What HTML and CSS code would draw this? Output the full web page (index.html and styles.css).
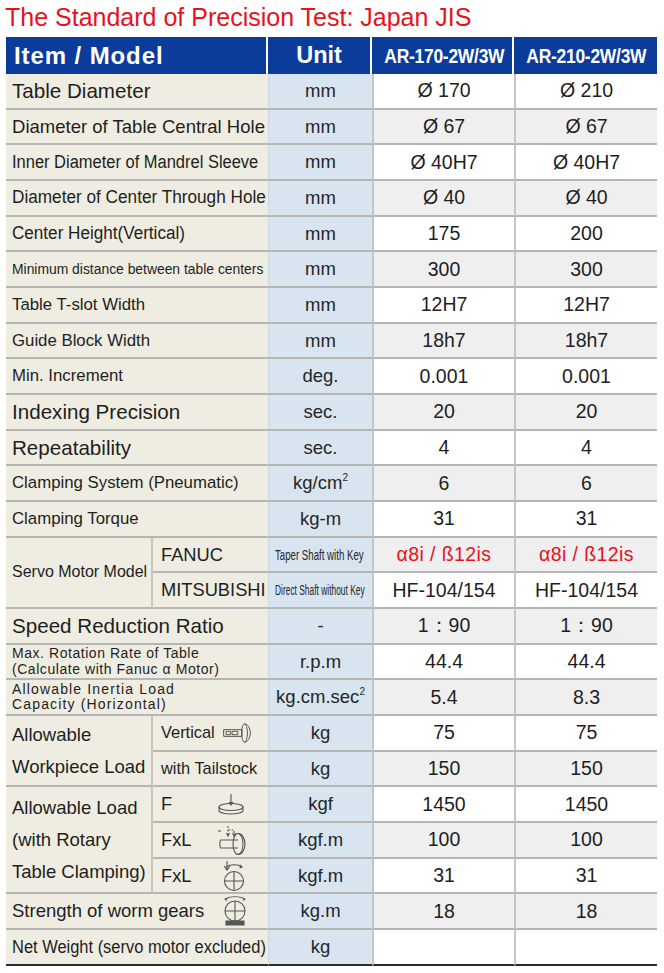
FILE: index.html
```html
<!DOCTYPE html>
<html>
<head>
<meta charset="utf-8">
<link rel="stylesheet" href="styles.css">
</head>
<body>
<h1 class="title">The Standard of Precision Test: Japan JIS</h1>
<table class="spec">
  <colgroup>
    <col class="c-a"><col class="c-b"><col class="c-unit"><col class="c-v"><col class="c-v2">
  </colgroup>
  <thead>
    <tr class="head">
      <th colspan="2" class="h-item">Item / Model</th>
      <th class="h-unit">Unit</th>
      <th class="h-model"><span class="hm">AR-170-2W/3W</span></th>
      <th class="h-model"><span class="hm">AR-210-2W/3W</span></th>
    </tr>
  </thead>
  <tbody>
    <tr class="w"><td colspan="2" class="lbl xl">Table Diameter</td><td class="unit">mm</td><td class="val">Ø 170</td><td class="val">Ø 210</td></tr>
    <tr class="g"><td colspan="2" class="lbl"><span class="sq f19 s975">Diameter of Table Central Hole</span></td><td class="unit">mm</td><td class="val">Ø 67</td><td class="val">Ø 67</td></tr>
    <tr class="w"><td colspan="2" class="lbl"><span class="sq f18 s915">Inner Diameter of Mandrel Sleeve</span></td><td class="unit">mm</td><td class="val">Ø 40H7</td><td class="val">Ø 40H7</td></tr>
    <tr class="g"><td colspan="2" class="lbl"><span class="sq f18 s955">Diameter of Center Through Hole</span></td><td class="unit">mm</td><td class="val">Ø 40</td><td class="val">Ø 40</td></tr>
    <tr class="w"><td colspan="2" class="lbl"><span class="sq f18 s95">Center Height(Vertical)</span></td><td class="unit">mm</td><td class="val">175</td><td class="val">200</td></tr>
    <tr class="g"><td colspan="2" class="lbl"><span class="sq f155 s895">Minimum distance between table centers</span></td><td class="unit">mm</td><td class="val">300</td><td class="val">300</td></tr>
    <tr class="w"><td colspan="2" class="lbl md2">Table T-slot Width</td><td class="unit">mm</td><td class="val">12H7</td><td class="val">12H7</td></tr>
    <tr class="g"><td colspan="2" class="lbl md2">Guide Block Width</td><td class="unit">mm</td><td class="val">18h7</td><td class="val">18h7</td></tr>
    <tr class="w"><td colspan="2" class="lbl md2">Min. Increment</td><td class="unit">deg.</td><td class="val">0.001</td><td class="val">0.001</td></tr>
    <tr class="g"><td colspan="2" class="lbl xl">Indexing Precision</td><td class="unit">sec.</td><td class="val">20</td><td class="val">20</td></tr>
    <tr class="w"><td colspan="2" class="lbl xl">Repeatability</td><td class="unit">sec.</td><td class="val">4</td><td class="val">4</td></tr>
    <tr class="g"><td colspan="2" class="lbl md2">Clamping System (Pneumatic)</td><td class="unit">kg/cm<sup>2</sup></td><td class="val">6</td><td class="val">6</td></tr>
    <tr class="w"><td colspan="2" class="lbl md2">Clamping Torque</td><td class="unit">kg-m</td><td class="val">31</td><td class="val">31</td></tr>
    <tr class="g"><td rowspan="2" class="lbl servo split">Servo Motor Model</td><td class="lbl sub big">FANUC</td><td class="unit tiny"><span class="sq s69">Taper Shaft with Key</span></td><td class="val red">α8i / ß12is</td><td class="val red">α8i / ß12is</td></tr>
    <tr class="w"><td class="lbl sub big">MITSUBISHI</td><td class="unit tiny"><span class="sq s60">Direct Shaft without Key</span></td><td class="val">HF-104/154</td><td class="val">HF-104/154</td></tr>
    <tr class="g"><td colspan="2" class="lbl xl">Speed Reduction Ratio</td><td class="unit">-</td><td class="val">1：90</td><td class="val">1：90</td></tr>
    <tr class="w"><td colspan="2" class="lbl two">Max. Rotation Rate of Table<br>(Calculate with Fanuc α Motor)</td><td class="unit">r.p.m</td><td class="val">44.4</td><td class="val">44.4</td></tr>
    <tr class="g"><td colspan="2" class="lbl two wide">Allowable Inertia Load<br>Capacity (Horizontal)</td><td class="unit">kg.cm.sec<sup>2</sup></td><td class="val">5.4</td><td class="val">8.3</td></tr>
    <tr class="w"><td rowspan="2" class="lbl grp tall split">Allowable<br>Workpiece Load</td>
      <td class="lbl sub"><span class="ico-row">Vertical
        <svg class="ico ico-v" viewBox="0 0 36 26"><g fill="none" stroke="#555" stroke-width="1.2"><path d="M2 9h22v8H2z"/><path d="M5 11h5v4H5zM12 11h7v4h-7z"/><ellipse cx="27" cy="13" rx="3.5" ry="11"/><path d="M27 2c3.5 0 7 5 7 11s-3.5 11-7 11"/></g></svg></span></td>
      <td class="unit">kg</td><td class="val">75</td><td class="val">75</td></tr>
    <tr class="g"><td class="lbl sub">with Tailstock</td><td class="unit">kg</td><td class="val">150</td><td class="val">150</td></tr>
    <tr class="w"><td rowspan="3" class="lbl grp tall split">Allowable Load<br>(with Rotary<br>Table Clamping)</td>
      <td class="lbl sub big"><span class="ico-row">F
        <svg class="ico ico-f" viewBox="0 0 34 24"><g fill="none" stroke="#555" stroke-width="1.1"><ellipse cx="17" cy="15" rx="12" ry="3.5"/><path d="M5 15v3.5c0 2 5.4 3.5 12 3.5s12-1.5 12-3.5V15"/><path d="M17 2v11"/><path d="M15 10l2 3 2-3" fill="#555"/></g></svg></span></td>
      <td class="unit">kgf</td><td class="val">1450</td><td class="val">1450</td></tr>
    <tr class="g"><td class="lbl sub big"><span class="ico-row">FxL
        <svg class="ico ico-fl" viewBox="0 0 34 32"><g fill="none" stroke="#555" stroke-width="1.1"><ellipse cx="24" cy="20" rx="5" ry="10.5"/><path d="M24 9.5c4 0 7 4.7 7 10.5s-3 10.5-7 10.5"/><path d="M7 16h17M7 24h17M7 16c-1.5 0-1.5 8 0 8"/><path d="M14 2v10M14 6h6v6" stroke-dasharray="2 1.5"/><path d="M12.5 9l1.5 3 1.5-3M18.5 9l1.5 3 1.5-3"/><path d="M4 7h3"/></g></svg></span></td>
      <td class="unit">kgf.m</td><td class="val">100</td><td class="val">100</td></tr>
    <tr class="w"><td class="lbl sub big"><span class="ico-row">FxL
        <svg class="ico ico-fl2" viewBox="0 0 34 32"><g fill="none" stroke="#555" stroke-width="1.1"><circle cx="20" cy="21" r="9.5"/><path d="M10.5 21h19M20 11.5v19"/><path d="M12 7c4-3 12-3 16 0"/><path d="M13 1v9M10 6l3 4 3-4"/><path d="M26 5l2 2-2.5 1"/></g></svg></span></td>
      <td class="unit">kgf.m</td><td class="val">31</td><td class="val">31</td></tr>
    <tr class="g"><td colspan="2" class="lbl"><span class="ico-row wide-row"><span class="f185">Strength of worm gears</span>
        <svg class="ico ico-w" viewBox="0 0 34 34"><g fill="none" stroke="#555" stroke-width="1.1"><circle cx="17" cy="17" r="10"/><path d="M7 17h20M17 7v20"/><path d="M7 5c6-3 14-3 20 0M9 4l-2 1 2 1.5M25 4l2 1-2 1.5"/><path d="M8 27h18v4H8z" fill="#555"/></g></svg></span></td>
      <td class="unit">kg.m</td><td class="val">18</td><td class="val">18</td></tr>
    <tr class="w last"><td colspan="2" class="lbl"><span class="sq f175 s94">Net Weight (servo motor excluded)</span></td><td class="unit">kg</td><td class="val"></td><td class="val"></td></tr>
  </tbody>
</table>
</body>
</html>
```
FILE: styles.css
```css
html, body {
  margin: 0;
  padding: 0;
  background: #ffffff;
}
body {
  font-family: "Liberation Sans", Arial, sans-serif;
  color: #1e1e1e;
  padding: 0 0 0 6px;
}
.title {
  margin: 0 0 0 -1px;
  height: 37px;
  font-weight: normal;
  font-size: 25px;
  line-height: 34px;
  color: #e8121c;
}
.spec {
  border-collapse: separate;
  border-spacing: 0;
  table-layout: fixed;
  width: 651px;
}
.c-a { width: 147px; }
.c-b { width: 115px; }
.c-unit { width: 104px; }
.c-v { width: 142px; }
.c-v2 { width: 143px; }

.head th {
  background: #0b3c9b;
  color: #ffffff;
  height: 37px;
  padding: 0;
  font-weight: bold;
  border-right: 2px solid #ffffff;
  box-sizing: border-box;
  white-space: nowrap;
}
.head th:last-child { border-right: none; }
.h-item {
  text-align: left;
  padding-left: 8px !important;
  font-size: 24px;
  letter-spacing: 0.9px;
}
.h-unit { font-size: 23.5px; text-align: center; }
.h-model { text-align: center; }
.hm {
  display: inline-block;
  font-size: 21px;
  transform: scaleX(0.83);
  letter-spacing: -0.3px;
}

.spec td {
  height: 35.68px;
  padding: 0;
  border-bottom: 2px solid #b5b5b5;
  box-sizing: border-box;
  vertical-align: middle;
}
.spec tr.last td { border-bottom: 2px solid #2a2a2a; }

.lbl {
  background: #efede1;
  text-align: left;
  padding-left: 6px !important;
  white-space: nowrap;
  overflow: visible;
}
.split { border-right: 2px solid #c9c7bb; }
.xl { font-size: 20.6px; }
.md2 { font-size: 16.8px; }
.servo { font-size: 16px; }
.grp { font-size: 18.5px; }
.f19 { font-size: 19px; }
.f18 { font-size: 18px; }
.f185 { font-size: 18.5px; }
.f175 { font-size: 17.5px; }
.f155 { font-size: 15.5px; }
.two { font-size: 14px; line-height: 15.5px; letter-spacing: 0.55px; }
.two.wide { letter-spacing: 1.15px; font-size: 14px; }
.tall { line-height: 32px; }
.sub { font-size: 16.4px; padding-left: 8px !important; }
.sub.big { font-size: 18.3px; }

.sq { display: inline-block; transform-origin: left center; white-space: nowrap; }
.s975 { transform: scaleX(0.975); }
.s955 { transform: scaleX(0.955); }
.s95 { transform: scaleX(0.95); }
.s94 { transform: scaleX(0.94); }
.s915 { transform: scaleX(0.915); }
.s895 { transform: scaleX(0.895); }
.s69 { transform: scaleX(0.69); }
.s60 { transform: scaleX(0.6); }

.unit {
  background: #d8e5f0;
  text-align: center;
  font-size: 18.5px;
  color: #262626;
  border-left: 1px solid #cfd7de;
}
.unit sup { font-size: 10px; vertical-align: 8px; }
.unit.tiny { font-size: 14px; text-align: left; padding-left: 6px !important; }

.val {
  text-align: center;
  font-size: 19.5px;
  color: #1e1e1e;
  border-left: 2px solid #c6c6c6;
}
tr.w .val { background: #ffffff; }
tr.g .val { background: #efefef; }
.val.red { color: #e8121c; letter-spacing: 0.4px; }

.ico-row {
  display: flex;
  align-items: center;
  justify-content: space-between;
  padding-right: 20px;
}
.wide-row { padding-right: 16px; }
.ico { display: block; flex: none; }
.ico-v { width: 30px; height: 22px; margin-right: -4px; }
.ico-f { width: 34px; height: 24px; }
.ico-fl { width: 34px; height: 32px; }
.ico-fl2 { width: 34px; height: 32px; }
.ico-w { width: 34px; height: 34px; }
```
